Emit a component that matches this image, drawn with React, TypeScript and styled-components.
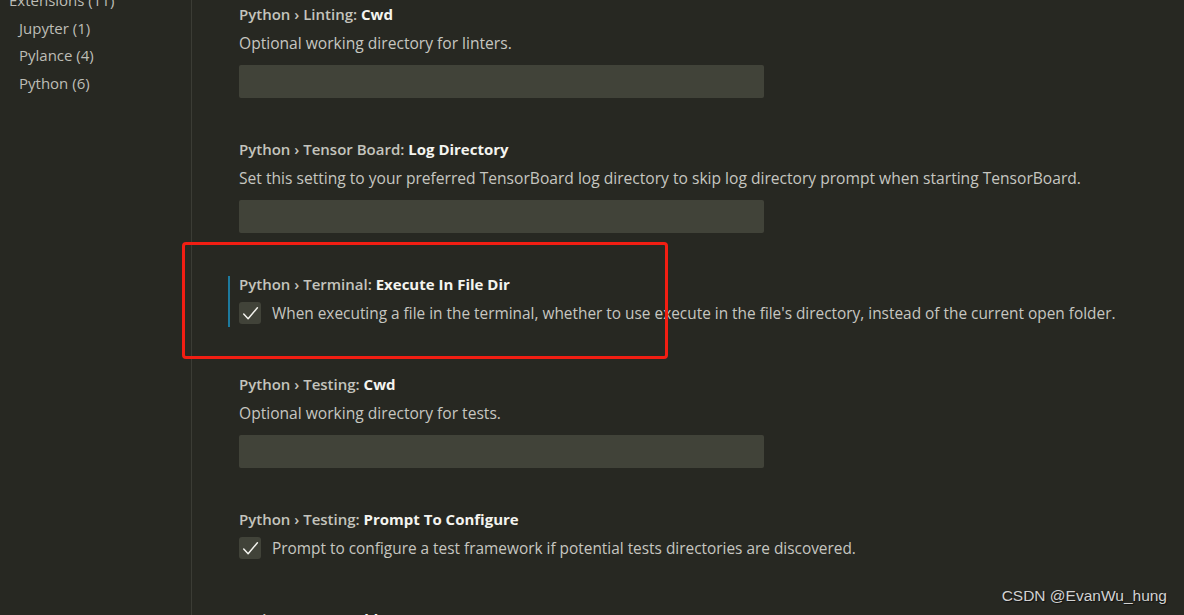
import React from 'react'
import styled, { createGlobalStyle } from 'styled-components'

const GlobalStyle = createGlobalStyle`
  html, body {
    margin: 0;
    padding: 0;
    background: #272822;
    overflow: hidden;
  }
  body {
    font-family: 'Open Sans', 'Noto Sans', sans-serif;
  }
`

const Page = styled.div`
  position: relative;
  display: flex;
  width: 1184px;
  height: 615px;
  overflow: hidden;
  background: #272822;
`

const Sidebar = styled.nav`
  flex: 0 0 191px;
  border-right: 1px solid #3b3c35;
  display: flex;
  flex-direction: column;
`

const TocItem = styled.div<{ $depth: number }>`
  height: 27.5px;
  line-height: 27.5px;
  padding-left: ${p => (p.$depth ? 19 : 9)}px;
  font-size: 15px;
  color: #bdbdb6;
  white-space: nowrap;
  &:first-child {
    margin-top: -13px;
  }
`

const Content = styled.main`
  flex: 1;
  padding: 6px 0 0 36px;
  display: flex;
  flex-direction: column;
`

const Setting = styled.section<{ $gap: number }>`
  margin-bottom: ${p => p.$gap}px;
`

const Body = styled.div<{ $focused?: boolean }>`
  border-left: 2px solid ${p => (p.$focused ? '#1d7a9e' : 'transparent')};
  padding: 0 0 3px 9px;
  display: flex;
  flex-direction: column;
`

const Title = styled.div`
  height: 16px;
  line-height: 16px;
  font-size: 15px;
  font-weight: 600;
  color: #c4c4bd;
  white-space: nowrap;
`

const Key = styled.span`
  color: #f4f4ef;
  font-weight: 700;
`

const Description = styled.div`
  margin-top: 10px;
  line-height: 22px;
  font-size: 15.6px;
  color: #c6c6c0;
  white-space: nowrap;
`

const TextInput = styled.div`
  margin-top: 11px;
  width: 525px;
  height: 33px;
  border-radius: 2px;
  background: #414339;
`

const CheckRow = styled.label`
  margin-top: 10px;
  display: flex;
  align-items: center;
  gap: 11px;
  height: 22px;
  font-size: 15.4px;
  color: #c6c6c0;
  white-space: nowrap;
`

const CheckBox = styled.span`
  flex: 0 0 22px;
  height: 22px;
  border-radius: 3px;
  background: #414339;
  display: flex;
  align-items: center;
  justify-content: center;
`

const Annotation = styled.div`
  position: absolute;
  left: 182px;
  top: 242px;
  width: 480px;
  height: 111px;
  border: 3px solid #f21e13;
  border-radius: 4px;
  pointer-events: none;
`

const Watermark = styled.div`
  position: absolute;
  right: 17px;
  bottom: 10px;
  font-family: 'Liberation Sans', Arial, sans-serif;
  font-size: 15.5px;
  color: #d2d2d2;
  text-shadow: 1px 1px 1px #111;
`

const Check = () => (
  <svg width="19" height="19" viewBox="0 0 16 16" fill="none">
    <path d="M2.3 8.4l3.7 4L13.8 3.2" stroke="#f4f4ef" strokeWidth="1.25" strokeLinecap="round" strokeLinejoin="round" />
  </svg>
)

interface SettingData {
  category: string
  name: string
  description: string
  kind: 'text' | 'check'
  focused?: boolean
}

const toc = [
  { label: 'Extensions (11)', depth: 0 },
  { label: 'Jupyter (1)', depth: 1 },
  { label: 'Pylance (4)', depth: 1 },
  { label: 'Python (6)', depth: 1 }
]

const settings: SettingData[] = [
  {
    category: 'Python › Linting: ',
    name: 'Cwd',
    description: 'Optional working directory for linters.',
    kind: 'text'
  },
  {
    category: 'Python › Tensor Board: ',
    name: 'Log Directory',
    description: 'Set this setting to your preferred TensorBoard log directory to skip log directory prompt when starting TensorBoard.',
    kind: 'text'
  },
  {
    category: 'Python › Terminal: ',
    name: 'Execute In File Dir',
    description: "When executing a file in the terminal, whether to use execute in the file's directory, instead of the current open folder.",
    kind: 'check',
    focused: true
  },
  {
    category: 'Python › Testing: ',
    name: 'Cwd',
    description: 'Optional working directory for tests.',
    kind: 'text'
  },
  {
    category: 'Python › Testing: ',
    name: 'Prompt To Configure',
    description: 'Prompt to configure a test framework if potential tests directories are discovered.',
    kind: 'check'
  },
  {
    category: 'Python › Venv: ',
    name: 'Folders',
    description: 'Folders in your home directory to look into for virtual environments.',
    kind: 'text'
  }
]

const App = () => (
  <Page>
    <GlobalStyle />
    <Sidebar>
      {toc.map(item => (
        <TocItem key={item.label} $depth={item.depth}>{item.label}</TocItem>
      ))}
    </Sidebar>
    <Content>
      {settings.map(s => (
        <Setting key={s.category + s.name} $gap={s.kind === 'check' ? 49 : 40}>
          <Body $focused={s.focused}>
            <Title>
              {s.category}
              <Key>{s.name}</Key>
            </Title>
            {s.kind === 'text' ? (
              <>
                <Description>{s.description}</Description>
                <TextInput />
              </>
            ) : (
              <CheckRow>
                <CheckBox><Check /></CheckBox>
                {s.description}
              </CheckRow>
            )}
          </Body>
        </Setting>
      ))}
    </Content>
    <Annotation />
    <Watermark>CSDN @EvanWu_hung</Watermark>
  </Page>
)

export default App
